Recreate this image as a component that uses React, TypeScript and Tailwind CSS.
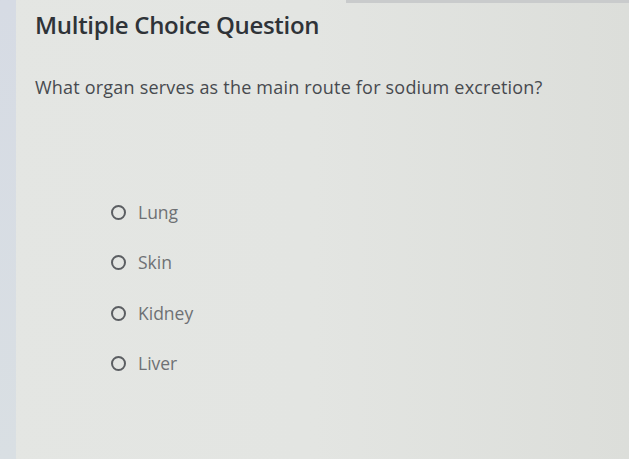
const choices = ["Lung", "Skin", "Kidney", "Liver"];

export default function App() {
  return (
    <div className="flex h-[459px] w-[629px] overflow-hidden bg-gradient-to-r from-[#e4e6e3] via-[#e3e5e2] to-[#dcdeda] font-['Open_Sans',sans-serif]">
      <div className="w-[16px] shrink-0 bg-gradient-to-b from-[#d6dbe4] to-[#d9dfe3]" />
      <div className="flex-1 flex flex-col">
        <div className="h-[3px] ml-[330px] bg-[#c9cbcc]" />
        <div className="pl-[19px] pt-[4px]">
          <h1 className="text-[24px] font-semibold text-[#2f3338] tracking-[-0.3px]">
            Multiple Choice Question
          </h1>
          <p className="mt-[31px] text-[18px] text-[#474a4f] tracking-[0.2px]">
            What organ serves as the main route for sodium excretion?
          </p>
          <ul className="mt-[100px] ml-[76px] flex flex-col gap-[28.5px]">
            {choices.map((c) => (
              <li key={c} className="flex items-center h-[22px]">
                <span className="w-[15px] h-[15px] rounded-full border-[2.5px] border-[#5b5e62]" />
                <span className="ml-[12px] text-[17.5px] text-[#6e7174]">{c}</span>
              </li>
            ))}
          </ul>
        </div>
      </div>
    </div>
  );
}
